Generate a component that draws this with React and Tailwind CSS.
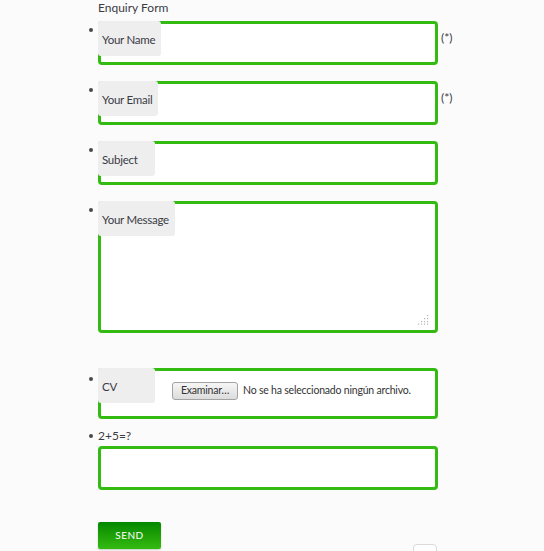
import React from "react";

const font = { fontFamily: "Lato, 'Open Sans', sans-serif" };

function Dot({ top = "pt-[7px]" }) {
  return (
    <span className={`w-[16px] shrink-0 pl-[7px] ${top}`}>
      <span className="block w-[4px] h-[4px] rounded-full bg-[#4a4a4a]" />
    </span>
  );
}

function Label({ children }) {
  return (
    <div className="absolute left-[-3px] top-[-3px] h-[35px] min-w-[57px] pl-[4px] pr-[6px] pt-[2px] bg-[#eeeeee] rounded-[3px] flex items-center text-[11.5px] tracking-[-0.25px] text-[#3b3b44]">
      {children}
    </div>
  );
}

function Field({ label, required, height = "h-[44px]", children }) {
  return (
    <li className="flex">
      <Dot />
      <div className={`relative w-[340px] ${height} border-[3px] border-[#33bb11] rounded-[4px] bg-white`}>
        <Label>{label}</Label>
        {children}
      </div>
      {required && (
        <span className="ml-[3px] mt-[10px] text-[12px] leading-[14px] text-[#3b3b44]">(*)</span>
      )}
    </li>
  );
}

export default function App() {
  return (
    <div className="relative min-h-[551px] h-[551px] overflow-hidden bg-[#fbfbfb] text-[#3b3b44]" style={font}>
      <div className="pl-[98px] pt-[0px]">
        <div className="text-[12px] leading-[16px] text-[#3b3b44]">Enquiry Form</div>
      </div>
      <ul className="mt-[5px] pl-[82px] flex flex-col">
        <Field label="Your Name" required />
        <div className="h-[16px]" />
        <Field label="Your Email" required />
        <div className="h-[16px]" />
        <Field label="Subject" />
        <div className="h-[16px]" />
        <Field label="Your Message" height="h-[132px]">
          <svg className="absolute right-[6px] bottom-[5px]" width="11" height="11" viewBox="0 0 11 11">
            <g fill="#b5b5b5">
              <rect x="9" y="1" width="1.2" height="1.2" />
              <rect x="6" y="4" width="1.2" height="1.2" />
              <rect x="9" y="4" width="1.2" height="1.2" />
              <rect x="3" y="7" width="1.2" height="1.2" />
              <rect x="6" y="7" width="1.2" height="1.2" />
              <rect x="9" y="7" width="1.2" height="1.2" />
              <rect x="0" y="9.5" width="1.2" height="1.2" />
              <rect x="3" y="9.5" width="1.2" height="1.2" />
              <rect x="6" y="9.5" width="1.2" height="1.2" />
              <rect x="9" y="9.5" width="1.2" height="1.2" />
            </g>
          </svg>
        </Field>
        <div className="h-[35px]" />
        <li className="flex">
          <Dot top="pt-[9px]" />
          <div className="relative w-[340px] h-[51px] border-[3px] border-[#33bb11] rounded-[4px] bg-white">
            <Label>CV</Label>
            <div className="flex items-center pl-[71px] pt-[11px]">
              <span className="h-[18px] w-[66px] flex items-center justify-center rounded-[3px] border border-[#a3a3a3] bg-gradient-to-b from-[#f6f6f6] to-[#dcdcdc] text-[10.5px] tracking-[-0.2px] text-[#333]">
                Examinar…
              </span>
              <span className="ml-[5px] text-[10.5px] tracking-[-0.2px] text-[#333]">No se ha seleccionado ningún archivo.</span>
            </div>
          </div>
        </li>
        <div className="h-[9px]" />
        <li className="flex">
          <Dot top="pt-[6px]" />
          <div>
            <div className="text-[12px] leading-[16px] text-[#3b3b44]">2+5=?</div>
            <div className="mt-[2px] w-[340px] h-[44px] border-[3px] border-[#33bb11] rounded-[4px] bg-white" />
          </div>
        </li>
      </ul>
      <div className="pl-[98px] mt-[31px]">
        <button className="w-[63px] h-[27px] rounded-[2px] bg-gradient-to-b from-[#008800] to-[#33bb11] text-white text-[10px] tracking-[0.5px] shadow-[0_1px_2px_rgba(0,0,0,0.2)]">
          SEND
        </button>
      </div>
      <div className="absolute left-[413px] top-[544px] w-[24px] h-[20px] rounded-t-[4px] border border-[#dadada] bg-white" />
    </div>
  );
}
